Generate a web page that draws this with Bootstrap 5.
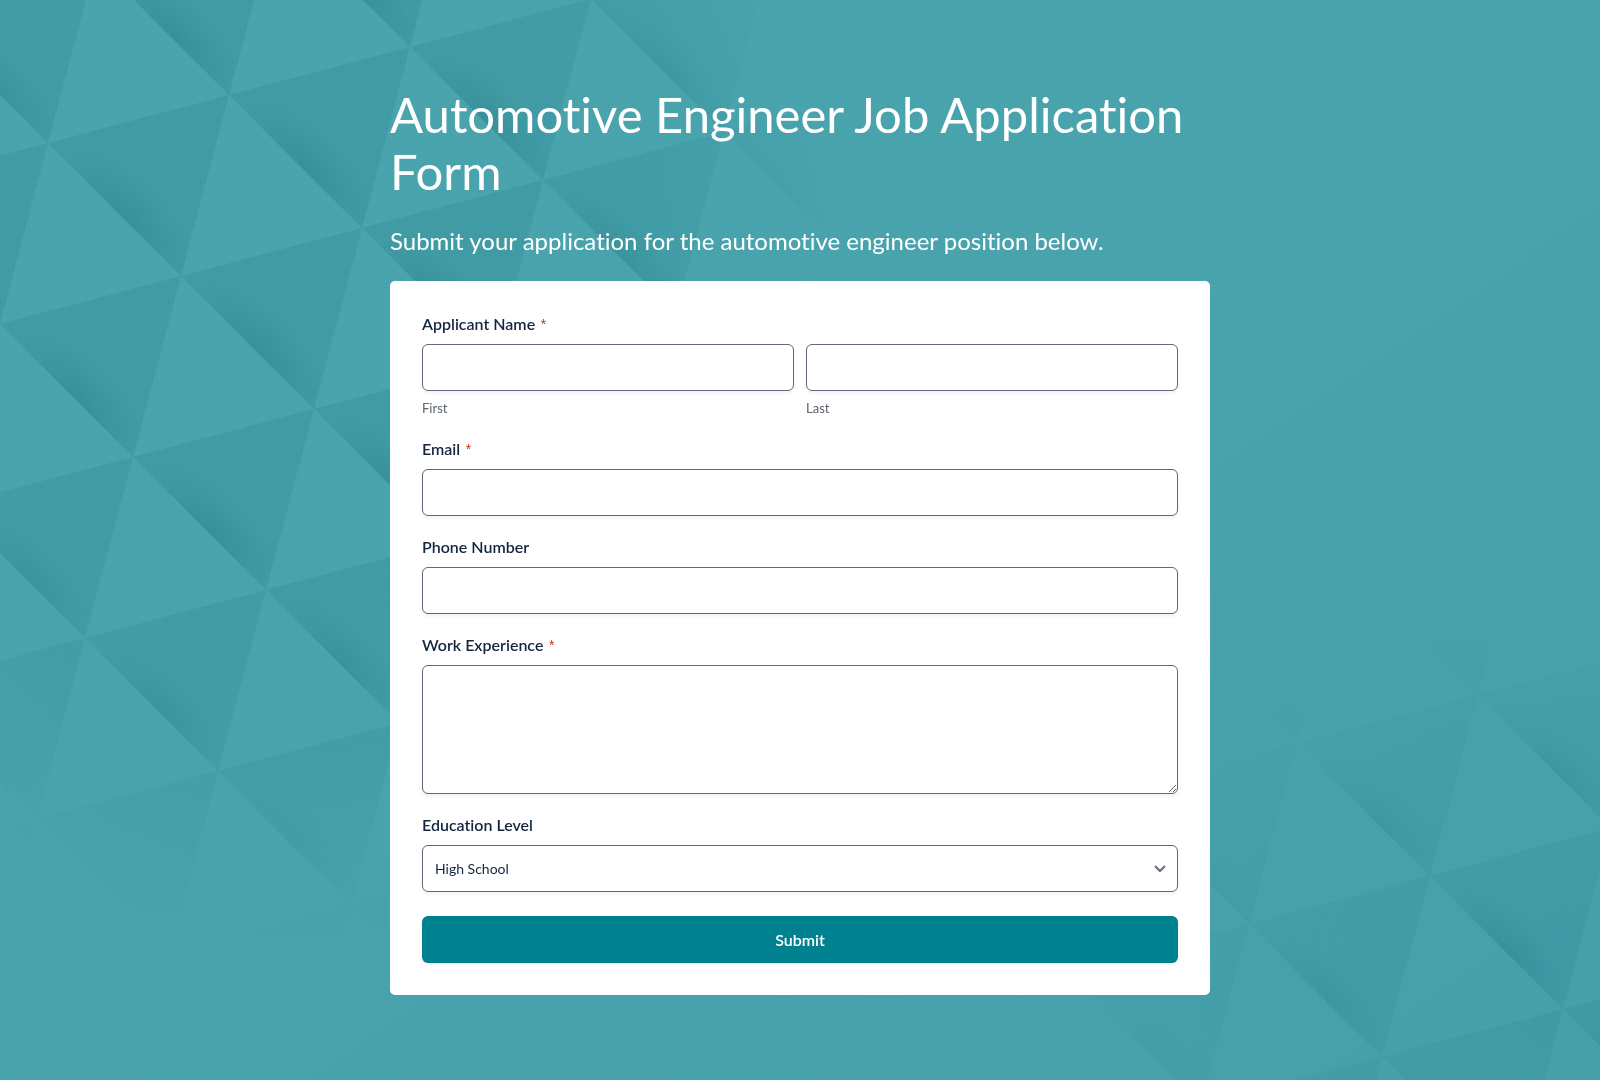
<!DOCTYPE html>
<html lang="en">
<head>
<meta charset="utf-8">
<meta name="viewport" content="width=device-width, initial-scale=1">
<title>Automotive Engineer Job Application Form</title>
<link rel="stylesheet" href="https://cdn.jsdelivr.net/npm/bootstrap@5.3.0/dist/css/bootstrap.min.css">
<style>
  body { font-family: Lato, "Open Sans", sans-serif; font-variant-ligatures: none; color: #14263e; background: #48a2ac; }
  .backdrop { width: 100%; height: 100%; z-index: -1; }
  .form-page { max-width: 844px; padding: 86px 12px 84px; }
  .form-title { font-size: 49px; line-height: 57px; font-weight: 400; margin-bottom: 24px; }
  .form-intro { font-size: 24px; line-height: 34px; margin-bottom: 23px; }
  .form-panel { border-radius: 5px; padding: 32px; }
  .field-stack { gap: 20px; }
  .name-row { gap: 12px; }
  .form-label { font-size: 16px; line-height: 21px; font-weight: 600; margin-bottom: 10px; }
  .required-mark { color: #d02a08; font-family: "Liberation Mono", monospace; font-size: 14px; line-height: 1; font-weight: 400; }
  .sub-label { display: block; font-size: 13px; line-height: 19px; margin-top: 8px; color: #5c6370; }
  .form-control, .form-select { height: 47px; font-size: 14px; color: #14263e; border: 1px solid #626878; border-radius: 6px; box-shadow: 0 2px 4px rgba(30, 40, 90, .07); padding: 12px; }
  .form-select { background-image: none; }
  textarea.form-control { height: 129px; display: block; }
  .select-arrow { right: 12px; top: 50%; transform: translateY(-50%); pointer-events: none; }
  .btn-send { height: 47px; margin-top: 4px; background: #00818f; color: #fff; border: 0; border-radius: 6px; font-size: 16px; font-weight: 600; box-shadow: 0 2px 4px rgba(30, 40, 90, .07); }
  .btn-send:hover { background: #006f7b; color: #fff; }
</style>
</head>
<body class="position-relative min-vh-100">
<svg class="backdrop position-absolute top-0 start-0" viewBox="0 0 1600 1080" preserveAspectRatio="xMidYMid slice" aria-hidden="true">
  <defs>
    <linearGradient id="base" x1="0" y1="0" x2="1" y2="1">
      <stop offset="0" stop-color="#4aa4ae"/><stop offset=".5" stop-color="#49a3ad"/><stop offset="1" stop-color="#469fa9"/>
    </linearGradient>
    <radialGradient id="shade" gradientUnits="userSpaceOnUse" cx="0" cy="0" r="1" gradientTransform="translate(76 76) rotate(45) scale(88 38)">
      <stop offset="0" stop-color="#2f8791" stop-opacity=".65"/><stop offset=".5" stop-color="#2f8791" stop-opacity=".28"/><stop offset="1" stop-color="#2f8791" stop-opacity="0"/>
    </radialGradient>
    <radialGradient id="fadeA" gradientUnits="userSpaceOnUse" cx="0" cy="0" r="1" gradientTransform="translate(290 270) scale(540 670)">
      <stop offset=".4" stop-color="#eee"/><stop offset=".7" stop-color="#bbb"/><stop offset=".86" stop-color="#555"/><stop offset="1" stop-color="#000"/>
    </radialGradient>
    <radialGradient id="fadeB" gradientUnits="userSpaceOnUse" cx="0" cy="0" r="1" gradientTransform="translate(1620 980) scale(540 370)">
      <stop offset=".2" stop-color="#ddd"/><stop offset=".6" stop-color="#888"/><stop offset="1" stop-color="#000"/>
    </radialGradient>
    <mask id="maskA" maskUnits="userSpaceOnUse" x="0" y="0" width="1600" height="1080"><rect width="1600" height="1080" fill="url(#fadeA)"/></mask>
    <mask id="maskB" maskUnits="userSpaceOnUse" x="0" y="0" width="1600" height="1080"><rect width="1600" height="1080" fill="url(#fadeB)"/></mask>
    <g id="facet">
      <path d="M0 0L181 -48L133 133Z" fill="#409aa4"/>
      <path d="M0 0L181 -48L133 133Z" fill="url(#shade)"/>
    </g>
  </defs>
  <rect width="1600" height="1080" fill="url(#base)"/>
  <g mask="url(#maskA)"><g id="facetsA"></g></g>
  <g mask="url(#maskB)"><g id="facetsB"></g></g>
</svg>

<main class="form-page container">
  <header class="text-white">
    <h1 class="form-title">Automotive Engineer Job Application Form</h1>
    <p class="form-intro">Submit your application for the automotive engineer position below.</p>
  </header>
  <form class="form-panel bg-white">
    <div class="field-stack d-flex flex-column">
      <div role="group" aria-labelledby="name-label">
        <label class="form-label d-block" id="name-label" for="first-name">Applicant Name <span class="required-mark">*</span></label>
        <div class="name-row d-flex">
          <div class="flex-fill">
            <input class="form-control" type="text" id="first-name" required>
            <label class="sub-label" for="first-name">First</label>
          </div>
          <div class="flex-fill">
            <input class="form-control" type="text" id="last-name" required>
            <label class="sub-label" for="last-name">Last</label>
          </div>
        </div>
      </div>
      <div>
        <label class="form-label d-block" for="email">Email <span class="required-mark">*</span></label>
        <input class="form-control" type="email" id="email" required>
      </div>
      <div>
        <label class="form-label d-block" for="phone">Phone Number</label>
        <input class="form-control" type="tel" id="phone">
      </div>
      <div>
        <label class="form-label d-block" for="experience">Work Experience <span class="required-mark">*</span></label>
        <textarea class="form-control" id="experience" required></textarea>
      </div>
      <div>
        <label class="form-label d-block" for="education">Education Level</label>
        <div class="position-relative">
          <select class="form-select" id="education">
            <option>High School</option>
            <option>Bachelor's Degree</option>
            <option>Master's Degree</option>
          </select>
          <svg class="select-arrow position-absolute" width="12" height="8" viewBox="0 0 12 8" fill="none" stroke="#626b7a" stroke-width="2" aria-hidden="true"><path d="M1 1L6 6L11 1"/></svg>
        </div>
      </div>
      <button type="submit" class="btn btn-send w-100">Submit</button>
    </div>
  </form>
</main>

<script src="https://cdn.jsdelivr.net/npm/bootstrap@5.3.0/dist/js/bootstrap.bundle.min.js"></script>
<script>
  // Tile the shaded facet over a slanted lattice that starts at (x0, y0).
  function tile(id, x0, y0, from, to) {
    var group = document.getElementById(id);
    for (var i = from; i <= to; i++) {
      for (var j = from; j <= to; j++) {
        var use = document.createElementNS('http://www.w3.org/2000/svg', 'use');
        use.setAttribute('href', '#facet');
        use.setAttribute('x', x0 + i * 181 + j * 133);
        use.setAttribute('y', y0 - i * 48 + j * 133);
        group.appendChild(use);
      }
    }
  }
  tile('facetsA', 48, 143, -6, 8);
  tile('facetsB', 1430, 876, -4, 4);
</script>
</body>
</html>
